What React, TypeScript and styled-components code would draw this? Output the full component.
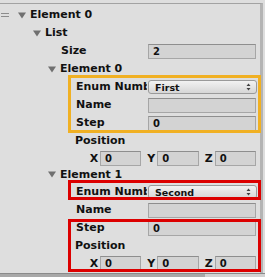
import styled, { createGlobalStyle } from "styled-components";

const GlobalStyle = createGlobalStyle`
    html, body {
        margin: 0;
        padding: 0;
        background: #dedede;
    }
    body {
        font-family: "DejaVu Sans", Verdana, sans-serif;
        font-weight: 700;
        font-size: 11px;
        color: #111;
    }
`;

const Fold = () => (
    <Arrow width="8" height="7" viewBox="0 0 8 7">
        <path d="M0 0.5 H8 L4 6.5 Z" fill="#707070" />
    </Arrow>
);

const Handle = () => (
    <Grip width="8" height="5" viewBox="0 0 8 5">
        <rect x="0" y="0" width="8" height="1" fill="#8c8c8c" />
        <rect x="0" y="3" width="8" height="1" fill="#8c8c8c" />
    </Grip>
);

const Spinner = () => (
    <Updown width="5" height="8" viewBox="0 0 5 8">
        <path d="M2.5 0.5 L4.5 3 H0.5 Z M2.5 7.5 L4.5 5 H0.5 Z" fill="#404040" />
    </Updown>
);

const VectorField = () => (
    <VectorRow>
        {["X", "Y", "Z"].map(axis => (
            <Axis key={axis}>
                <AxisLabel>{axis}</AxisLabel>
                <Input>0</Input>
            </Axis>
        ))}
    </VectorRow>
);

const App = () => {
    return (
        <>
            <GlobalStyle />
            <Inspector>
                <Body>
                    <Row $indent={1}>
                        <Handle />
                        <Fold />
                        <Label>Element 0</Label>
                    </Row>
                    <Row $indent={33}>
                        <Fold />
                        <Label>List</Label>
                    </Row>
                    <Row $indent={61}>
                        <Label>Size</Label>
                        <Input>2</Input>
                    </Row>
                    <Row $indent={48}>
                        <Fold />
                        <Label>Element 0</Label>
                    </Row>
                    <Highlight $color="#f0b023" $top={-3} $bottom={-1}>
                        <Row $indent={76}>
                            <Label>Enum Number</Label>
                            <Dropdown>First<Spinner /></Dropdown>
                        </Row>
                        <Row $indent={76}>
                            <Label>Name</Label>
                            <Input />
                        </Row>
                        <Row $indent={76}>
                            <Label>Step</Label>
                            <Input>0</Input>
                        </Row>
                    </Highlight>
                    <Row $indent={75}>
                        <Label>Position</Label>
                    </Row>
                    <VectorField />
                    <Row $indent={48} $height={17}>
                        <Fold />
                        <Label>Element 1</Label>
                    </Row>
                    <Highlight $color="#dc0000" $top={-3} $bottom={1}>
                        <Row $indent={76}>
                            <Label>Enum Number</Label>
                            <Dropdown>Second<Spinner /></Dropdown>
                        </Row>
                    </Highlight>
                    <Row $indent={76}>
                        <Label>Name</Label>
                        <Input />
                    </Row>
                    <Highlight $color="#dc0000" $top={0} $bottom={-1}>
                        <Row $indent={76}>
                            <Label>Step</Label>
                            <Input>0</Input>
                        </Row>
                        <Row $indent={75}>
                            <Label>Position</Label>
                        </Row>
                        <VectorField />
                    </Highlight>
                </Body>
                <Footer>
                    <Thumb />
                </Footer>
            </Inspector>
        </>
    );
};

export default App;

const Inspector = styled.div`
    width: 265px;
    height: 277px;
    padding-top: 3px;
    box-sizing: border-box;
    display: flex;
    flex-direction: column;
    overflow: hidden;
`;

const Body = styled.div`
    width: 263px;
    height: 270px;
    box-sizing: border-box;
    border-top: 1px solid #a2a2a2;
    border-right: 3px solid #b4b4b4;
    padding-top: 2px;
    display: flex;
    flex-direction: column;
`;

const Row = styled.div<{ $indent: number; $height?: number }>`
    height: ${props => props.$height ?? 18}px;
    display: flex;
    align-items: center;
    padding-left: ${props => props.$indent}px;
    padding-right: 4px;
    flex-shrink: 0;
`;

const Label = styled.div`
    flex: 1;
    min-width: 0;
    white-space: nowrap;
    overflow: hidden;
    line-height: 14px;
`;

const Arrow = styled.svg`
    flex-shrink: 0;
    margin-right: 4px;
`;

const Grip = styled.svg`
    flex-shrink: 0;
    margin-right: 9px;
`;

const Input = styled.div`
    width: 108px;
    height: 15px;
    box-sizing: border-box;
    flex-shrink: 0;
    background: #d3d3d3;
    border: 1px solid #a6a6a6;
    border-top-color: #8e8e8e;
    padding-left: 4px;
    font-size: 10px;
    line-height: 13px;
`;

const Dropdown = styled.div`
    width: 109px;
    height: 14px;
    box-sizing: border-box;
    flex-shrink: 0;
    margin-right: -1px;
    margin-left: 1px;
    display: flex;
    align-items: center;
    justify-content: space-between;
    padding: 0 5px 0 6px;
    border: 1px solid #9a9a9a;
    border-radius: 3px;
    background: linear-gradient(#f2f2f2, #d6d6d6);
    font-size: 9.5px;
`;

const Updown = styled.svg`
    flex-shrink: 0;
`;

const VectorRow = styled.div`
    height: 16px;
    display: flex;
    align-items: center;
    gap: 4px;
    padding-left: 88px;
    padding-right: 4px;
    flex-shrink: 0;
`;

const Axis = styled.div`
    flex: 1;
    display: flex;
    align-items: center;

    ${Input} {
        flex: 1;
        width: auto;
    }
`;

const AxisLabel = styled.div`
    width: 12px;
    text-align: center;
    flex-shrink: 0;
`;

const Highlight = styled.div<{ $color: string; $top: number; $bottom: number }>`
    position: relative;
    flex-shrink: 0;
    &::after {
        content: "";
        position: absolute;
        left: 68px;
        right: -1px;
        top: ${props => props.$top}px;
        bottom: ${props => props.$bottom}px;
        border: 3px solid ${props => props.$color};
        pointer-events: none;
    }
`;

const Footer = styled.div`
    height: 4px;
    box-sizing: border-box;
    border-top: 1px solid #8a8a8a;
    background: #d2d2d2;
    display: flex;
`;

const Thumb = styled.div`
    width: 205px;
    background: #a8a8a8;
`;
